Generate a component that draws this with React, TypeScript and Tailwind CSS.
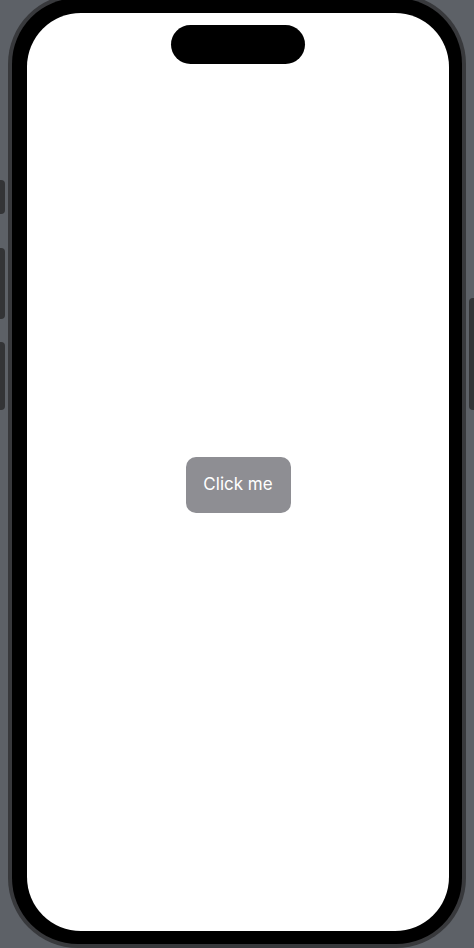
export default function App() {
    return (
        <div className="relative w-[474px] h-[948px] overflow-hidden bg-[#5d6167]" style={{ fontFamily: "Inter, 'Noto Sans', sans-serif" }}>
            {/* side buttons */}
            <div className="absolute left-0 top-[180px] w-[5px] h-[34px] rounded-r-sm bg-[#333436]" />
            <div className="absolute left-0 top-[248px] w-[5px] h-[71px] rounded-r-sm bg-[#333436]" />
            <div className="absolute left-0 top-[342px] w-[5px] h-[68px] rounded-r-sm bg-[#333436]" />
            <div className="absolute right-0 top-[298px] w-[5px] h-[112px] rounded-l-sm bg-[#333436]" />

            {/* phone body */}
            <div className="ml-[8px] mt-[-6px] w-[458px] h-[954px] rounded-[70px] bg-[#38393c] p-[4px]">
                <div className="w-full h-full rounded-[66px] bg-black pl-[15px] pr-[13px] pt-[15px] pb-[13px]">
                    <div className="w-full h-full rounded-[54px] bg-white flex flex-col">
                        <div className="flex justify-center pt-[12px]">
                            <div className="w-[134px] h-[39px] rounded-full bg-black" />
                        </div>
                        <div className="flex-1 flex items-center justify-center pt-[8px] pb-[34px]">
                            <button className="w-[105px] h-[56px] rounded-[10px] bg-[#8e8e93] text-white text-[17px]">
                                Click me
                            </button>
                        </div>
                    </div>
                </div>
            </div>
        </div>
    );
}
